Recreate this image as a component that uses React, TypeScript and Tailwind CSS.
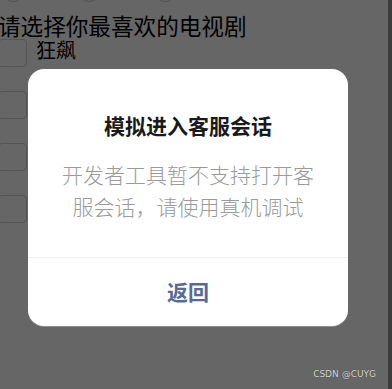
const shows = ["狂飙", "三体", "漫长的季节", "繁花"];

export default function App() {
  return (
    <div className="relative h-[389px] w-[392px] overflow-hidden bg-white font-['Noto_Sans_CJK_SC','Noto_Sans',sans-serif] text-black">
      {/* page under the mask */}
      <div className="flex gap-[52px] pl-[1px] -mt-[22px]">
        <div className="h-[24px] w-[24px] rounded-full border border-[#d1d1d1]" />
        <div className="h-[24px] w-[24px] rounded-full border border-[#d1d1d1]" />
        <div className="h-[24px] w-[24px] rounded-full border border-[#d1d1d1]" />
      </div>
      <div className="-ml-[2px] mt-[9px] text-[22.6px] leading-[30px]">请选择你最喜欢的电视剧</div>
      <div className="-mt-[2px] flex flex-col gap-[24px]">
        {shows.map((s) => (
          <div key={s} className="flex items-start">
            <div className="-ml-[2px] h-[28px] w-[29px] rounded-[4px] border border-[#d1d1d1]" />
            <span className="ml-[9px] -mt-[2px] text-[20px] leading-[26px]">{s}</span>
          </div>
        ))}
      </div>

      {/* mask + dialog */}
      <div className="absolute inset-0 flex items-start bg-black/60 pl-[28px]">
        <div className="mt-[69px] w-[320px] overflow-hidden rounded-[16px] bg-white shadow-[0_1px_0_rgba(255,255,255,0.25)]">
          <div className="px-[32px] pt-[41px] pb-[35px] text-center">
            <div className="text-[21px] font-bold leading-[30px] text-[#1a1a1a]">模拟进入客服会话</div>
            <div className="mt-[18px] text-[21px] font-light leading-[32px] text-[#9a9a9a]">
              开发者工具暂不支持打开客服会话，请使用真机调试
            </div>
          </div>
          <div className="flex h-[69px] items-center justify-center border-t border-[#f0f0f0] text-[21px] font-bold text-[#576b95]">
            返回
          </div>
        </div>
        <div className="absolute right-0 top-0 h-full w-[4px] bg-[#3c3c3c]" />
      </div>

      <div className="absolute bottom-[8px] right-[16px] font-['DejaVu_Sans',sans-serif] text-[9px] text-[#d8d8d8] [text-shadow:0_0_1px_#333]">
        CSDN @CUYG
      </div>
    </div>
  );
}
